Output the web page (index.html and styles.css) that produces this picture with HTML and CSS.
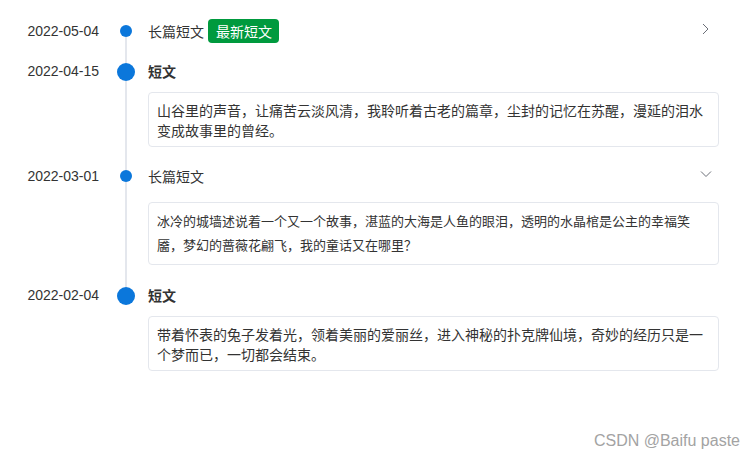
FILE: index.html
```html
<!DOCTYPE html>
<html lang="zh-CN">
<head>
<meta charset="utf-8">
<title>Timeline</title>
<link rel="stylesheet" href="styles.css">
</head>
<body>
<div class="timeline">
  <div class="item item-first">
    <div class="date">2022-05-04</div>
    <div class="axis">
      <div class="seg seg-top seg-hidden"></div>
      <div class="dot"></div>
      <div class="seg seg-rest"></div>
    </div>
    <div class="content pad-16">
      <div class="head">
        <span class="title">长篇短文</span>
        <span class="tag">最新短文</span>
        <svg class="chev" width="20" height="24" viewBox="0 0 20 24"><path d="M7 5 L12 10 L7 15" fill="none" stroke="#6b6f78" stroke-width="1"/></svg>
      </div>
    </div>
  </div>

  <div class="item">
    <div class="date">2022-04-15</div>
    <div class="axis">
      <div class="seg seg-top-big"></div>
      <div class="dot dot-big"></div>
      <div class="seg seg-rest"></div>
    </div>
    <div class="content pad-17">
      <div class="head">
        <span class="title title-bold">短文</span>
      </div>
      <div class="card card-a">山谷里的声音，让痛苦云淡风清，我聆听着古老的篇章，尘封的记忆在苏醒，漫延的泪水变成故事里的曾经。</div>
    </div>
  </div>

  <div class="item">
    <div class="date">2022-03-01</div>
    <div class="axis">
      <div class="seg seg-top"></div>
      <div class="dot"></div>
      <div class="seg seg-rest"></div>
    </div>
    <div class="content pad-18">
      <div class="head">
        <span class="title">长篇短文</span>
        <svg class="chev" width="20" height="24" viewBox="0 0 20 24"><path d="M5 7.5 L10 12.5 L15 7.5" fill="none" stroke="#6b6f78" stroke-width="1"/></svg>
      </div>
      <div class="card card-b">冰冷的城墙述说着一个又一个故事，湛蓝的大海是人鱼的眼泪，透明的水晶棺是公主的幸福笑靥，梦幻的蔷薇花翩飞，我的童话又在哪里？</div>
    </div>
  </div>

  <div class="item">
    <div class="date">2022-02-04</div>
    <div class="axis">
      <div class="seg seg-top-big"></div>
      <div class="dot dot-big"></div>
    </div>
    <div class="content">
      <div class="head">
        <span class="title title-bold">短文</span>
      </div>
      <div class="card card-c">带着怀表的兔子发着光，领着美丽的爱丽丝，进入神秘的扑克牌仙境，奇妙的经历只是一个梦而已，一切都会结束。</div>
    </div>
  </div>
</div>
<div class="watermark">CSDN @Baifu paste</div>
</body>
</html>
```

FILE: styles.css
```css
html, body {
  margin: 0;
  padding: 0;
  background: #ffffff;
}

body {
  font-family: "Liberation Sans", "Noto Sans CJK SC", sans-serif;
  color: #333333;
  width: 756px;
  height: 459px;
  overflow: hidden;
  position: relative;
}

.timeline {
  padding-top: 19px;
  width: 719px;
}

.item {
  display: flex;
  align-items: stretch;
}

.date {
  width: 104px;
  box-sizing: border-box;
  padding-right: 5px;
  text-align: right;
  font-size: 14px;
  line-height: 24px;
  height: 24px;
  color: #333333;
  flex: none;
}

.axis {
  width: 44px;
  flex: none;
  display: flex;
  flex-direction: column;
  align-items: center;
}

.seg {
  width: 2px;
  background: #e4e7ed;
  flex: none;
}

.seg-top { height: 6px; }
.seg-top-big { height: 4px; }
.seg-hidden { background: transparent; }
.seg-rest { flex: 1 1 auto; }

.dot {
  width: 12px;
  height: 12px;
  border-radius: 50%;
  background: #0b77db;
  flex: none;
}

.dot-big {
  width: 18px;
  height: 18px;
}

.content {
  flex: 1 1 auto;
  min-width: 0;
}

.pad-16 { padding-bottom: 16px; }
.pad-17 { padding-bottom: 17px; }
.pad-18 { padding-bottom: 18px; }

.head {
  display: flex;
  align-items: center;
  height: 24px;
}

.title {
  font-family: "Noto Sans CJK SC", sans-serif;
  font-size: 14px;
  line-height: 24px;
  color: #333333;
}

.title-bold {
  font-weight: bold;
}

.tag {
  font-family: "Noto Sans CJK SC", sans-serif;
  margin-left: 4px;
  height: 24px;
  line-height: 24px;
  padding: 0 7px 0 8px;
  font-size: 14px;
  color: #ffffff;
  background: #009a3e;
  border-radius: 4px;
}

.chev {
  margin-left: auto;
  margin-right: 3px;
  display: block;
  flex: none;
}

.card {
  font-family: "Noto Sans CJK SC", sans-serif;
  border: 1px solid #e4e7ed;
  border-radius: 4px;
  color: #333333;
  background: #ffffff;
}

.card-a, .card-c {
  margin-top: 9px;
  font-size: 14px;
  line-height: 19.5px;
  padding: 8px 8px 6px 8px;
}

.card-b {
  margin-top: 14px;
  font-size: 13px;
  line-height: 24px;
  padding: 6px 28px 7px 8px;
}

.watermark {
  position: absolute;
  right: 16px;
  top: 433px;
  font-family: "Liberation Sans", sans-serif;
  font-size: 16px;
  line-height: 16px;
  color: #a3a3a3;
}
```
